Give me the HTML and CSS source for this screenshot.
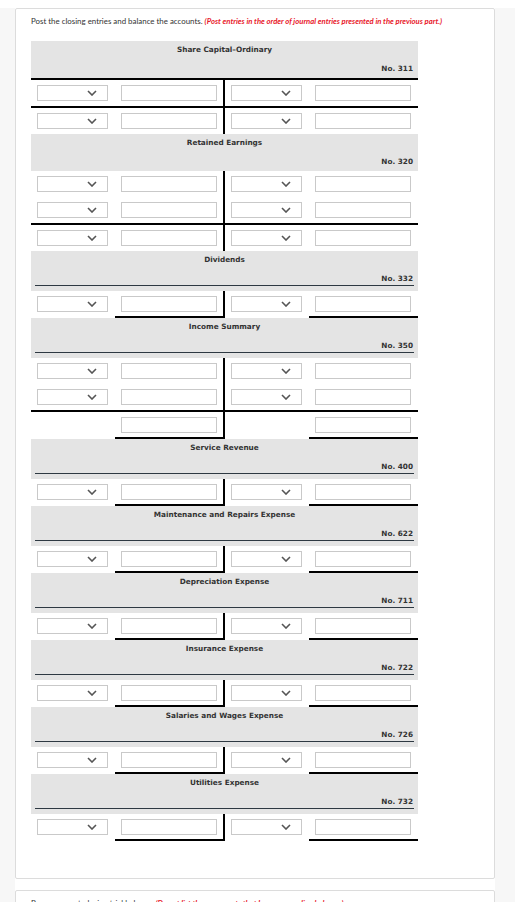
FILE: index.html
```html
<!DOCTYPE html>
<html lang="en">
<head>
<meta charset="utf-8">
<title>Post closing entries</title>
<link rel="stylesheet" href="styles.css">
</head>
<body>
<div class="page">
  <div class="column">
    <section class="card">
      <p class="prompt">Post the closing entries and balance the accounts. <em class="hint">(Post entries in the order of journal entries presented in the previous part.)</em></p>

      <!-- Share Capital–Ordinary -->
      <div class="acct">
        <div class="acct-head plain"><div class="acct-head-in"><div class="acct-title">Share Capital–Ordinary</div><div class="acct-no">No. 311</div></div></div>
        <div class="row rule">
          <div class="cell sel"><div class="select"><svg width="10" height="6" viewBox="0 0 10 6"><polyline points="1,1 5,5 9,1"/></svg></div></div>
          <div class="cell amt mid"><div class="input"></div></div>
          <div class="cell sel"><div class="select"><svg width="10" height="6" viewBox="0 0 10 6"><polyline points="1,1 5,5 9,1"/></svg></div></div>
          <div class="cell amt"><div class="input"></div></div>
        </div>
        <div class="row rule">
          <div class="cell sel"><div class="select"><svg width="10" height="6" viewBox="0 0 10 6"><polyline points="1,1 5,5 9,1"/></svg></div></div>
          <div class="cell amt mid"><div class="input"></div></div>
          <div class="cell sel"><div class="select"><svg width="10" height="6" viewBox="0 0 10 6"><polyline points="1,1 5,5 9,1"/></svg></div></div>
          <div class="cell amt"><div class="input"></div></div>
        </div>
      </div>

      <!-- Retained Earnings -->
      <div class="acct">
        <div class="acct-head plain"><div class="acct-head-in"><div class="acct-title">Retained Earnings</div><div class="acct-no">No. 320</div></div></div>
        <div class="row">
          <div class="cell sel"><div class="select"><svg width="10" height="6" viewBox="0 0 10 6"><polyline points="1,1 5,5 9,1"/></svg></div></div>
          <div class="cell amt mid"><div class="input"></div></div>
          <div class="cell sel"><div class="select"><svg width="10" height="6" viewBox="0 0 10 6"><polyline points="1,1 5,5 9,1"/></svg></div></div>
          <div class="cell amt"><div class="input"></div></div>
        </div>
        <div class="row">
          <div class="cell sel"><div class="select"><svg width="10" height="6" viewBox="0 0 10 6"><polyline points="1,1 5,5 9,1"/></svg></div></div>
          <div class="cell amt mid"><div class="input"></div></div>
          <div class="cell sel"><div class="select"><svg width="10" height="6" viewBox="0 0 10 6"><polyline points="1,1 5,5 9,1"/></svg></div></div>
          <div class="cell amt"><div class="input"></div></div>
        </div>
        <div class="row rule">
          <div class="cell sel"><div class="select"><svg width="10" height="6" viewBox="0 0 10 6"><polyline points="1,1 5,5 9,1"/></svg></div></div>
          <div class="cell amt mid"><div class="input"></div></div>
          <div class="cell sel"><div class="select"><svg width="10" height="6" viewBox="0 0 10 6"><polyline points="1,1 5,5 9,1"/></svg></div></div>
          <div class="cell amt"><div class="input"></div></div>
        </div>
      </div>

      <!-- Dividends -->
      <div class="acct">
        <div class="acct-head"><div class="acct-head-in"><div class="acct-title">Dividends</div><div class="acct-no">No. 332</div></div></div>
        <div class="row total">
          <div class="cell sel"><div class="select"><svg width="10" height="6" viewBox="0 0 10 6"><polyline points="1,1 5,5 9,1"/></svg></div></div>
          <div class="cell amt mid"><div class="input"></div></div>
          <div class="cell sel"><div class="select"><svg width="10" height="6" viewBox="0 0 10 6"><polyline points="1,1 5,5 9,1"/></svg></div></div>
          <div class="cell amt"><div class="input"></div></div>
        </div>
      </div>

      <!-- Income Summary -->
      <div class="acct">
        <div class="acct-head"><div class="acct-head-in"><div class="acct-title">Income Summary</div><div class="acct-no">No. 350</div></div></div>
        <div class="row">
          <div class="cell sel"><div class="select"><svg width="10" height="6" viewBox="0 0 10 6"><polyline points="1,1 5,5 9,1"/></svg></div></div>
          <div class="cell amt mid"><div class="input"></div></div>
          <div class="cell sel"><div class="select"><svg width="10" height="6" viewBox="0 0 10 6"><polyline points="1,1 5,5 9,1"/></svg></div></div>
          <div class="cell amt"><div class="input"></div></div>
        </div>
        <div class="row">
          <div class="cell sel"><div class="select"><svg width="10" height="6" viewBox="0 0 10 6"><polyline points="1,1 5,5 9,1"/></svg></div></div>
          <div class="cell amt mid"><div class="input"></div></div>
          <div class="cell sel"><div class="select"><svg width="10" height="6" viewBox="0 0 10 6"><polyline points="1,1 5,5 9,1"/></svg></div></div>
          <div class="cell amt"><div class="input"></div></div>
        </div>
        <div class="row rule total">
          <div class="cell sel"></div>
          <div class="cell amt mid"><div class="input"></div></div>
          <div class="cell sel"></div>
          <div class="cell amt"><div class="input"></div></div>
        </div>
      </div>

      <!-- Service Revenue -->
      <div class="acct">
        <div class="acct-head"><div class="acct-head-in"><div class="acct-title">Service Revenue</div><div class="acct-no">No. 400</div></div></div>
        <div class="row total">
          <div class="cell sel"><div class="select"><svg width="10" height="6" viewBox="0 0 10 6"><polyline points="1,1 5,5 9,1"/></svg></div></div>
          <div class="cell amt mid"><div class="input"></div></div>
          <div class="cell sel"><div class="select"><svg width="10" height="6" viewBox="0 0 10 6"><polyline points="1,1 5,5 9,1"/></svg></div></div>
          <div class="cell amt"><div class="input"></div></div>
        </div>
      </div>

      <!-- Maintenance and Repairs Expense -->
      <div class="acct">
        <div class="acct-head"><div class="acct-head-in"><div class="acct-title">Maintenance and Repairs Expense</div><div class="acct-no">No. 622</div></div></div>
        <div class="row total">
          <div class="cell sel"><div class="select"><svg width="10" height="6" viewBox="0 0 10 6"><polyline points="1,1 5,5 9,1"/></svg></div></div>
          <div class="cell amt mid"><div class="input"></div></div>
          <div class="cell sel"><div class="select"><svg width="10" height="6" viewBox="0 0 10 6"><polyline points="1,1 5,5 9,1"/></svg></div></div>
          <div class="cell amt"><div class="input"></div></div>
        </div>
      </div>

      <!-- Depreciation Expense -->
      <div class="acct">
        <div class="acct-head"><div class="acct-head-in"><div class="acct-title">Depreciation Expense</div><div class="acct-no">No. 711</div></div></div>
        <div class="row total">
          <div class="cell sel"><div class="select"><svg width="10" height="6" viewBox="0 0 10 6"><polyline points="1,1 5,5 9,1"/></svg></div></div>
          <div class="cell amt mid"><div class="input"></div></div>
          <div class="cell sel"><div class="select"><svg width="10" height="6" viewBox="0 0 10 6"><polyline points="1,1 5,5 9,1"/></svg></div></div>
          <div class="cell amt"><div class="input"></div></div>
        </div>
      </div>

      <!-- Insurance Expense -->
      <div class="acct">
        <div class="acct-head"><div class="acct-head-in"><div class="acct-title">Insurance Expense</div><div class="acct-no">No. 722</div></div></div>
        <div class="row total">
          <div class="cell sel"><div class="select"><svg width="10" height="6" viewBox="0 0 10 6"><polyline points="1,1 5,5 9,1"/></svg></div></div>
          <div class="cell amt mid"><div class="input"></div></div>
          <div class="cell sel"><div class="select"><svg width="10" height="6" viewBox="0 0 10 6"><polyline points="1,1 5,5 9,1"/></svg></div></div>
          <div class="cell amt"><div class="input"></div></div>
        </div>
      </div>

      <!-- Salaries and Wages Expense -->
      <div class="acct">
        <div class="acct-head"><div class="acct-head-in"><div class="acct-title">Salaries and Wages Expense</div><div class="acct-no">No. 726</div></div></div>
        <div class="row total">
          <div class="cell sel"><div class="select"><svg width="10" height="6" viewBox="0 0 10 6"><polyline points="1,1 5,5 9,1"/></svg></div></div>
          <div class="cell amt mid"><div class="input"></div></div>
          <div class="cell sel"><div class="select"><svg width="10" height="6" viewBox="0 0 10 6"><polyline points="1,1 5,5 9,1"/></svg></div></div>
          <div class="cell amt"><div class="input"></div></div>
        </div>
      </div>

      <!-- Utilities Expense -->
      <div class="acct">
        <div class="acct-head"><div class="acct-head-in"><div class="acct-title">Utilities Expense</div><div class="acct-no">No. 732</div></div></div>
        <div class="row total">
          <div class="cell sel"><div class="select"><svg width="10" height="6" viewBox="0 0 10 6"><polyline points="1,1 5,5 9,1"/></svg></div></div>
          <div class="cell amt mid"><div class="input"></div></div>
          <div class="cell sel"><div class="select"><svg width="10" height="6" viewBox="0 0 10 6"><polyline points="1,1 5,5 9,1"/></svg></div></div>
          <div class="cell amt"><div class="input"></div></div>
        </div>
      </div>
    </section>

    <section class="card next">
      <p class="prompt">Prepare a post-closing trial balance. <em class="hint">(Do not list those accounts that have zero ending balance.)</em></p>
    </section>
  </div>
</div>
</body>
</html>
```

FILE: styles.css
```css
html, body {
  margin: 0;
  padding: 0;
  background: #ffffff;
}

.page {
  margin-top: 8px;
  background: #f7f7f7;
  min-height: 894px;
  padding-left: 15px;
}

.column {
  width: 480px;
  background: #ffffff;
}

.card {
  box-sizing: border-box;
  width: 480px;
  border: 1px solid #dcdcdc;
  border-radius: 2px;
  background: #ffffff;
  padding: 7px 15px 37px 15px;
}

.card.next {
  margin-top: 11px;
  padding-bottom: 20px;
}

.prompt {
  margin: 0 0 15px 0;
  font-family: Lato, "Open Sans", sans-serif;
  font-size: 7.9px;
  line-height: 10px;
  color: #333333;
}

.hint {
  color: #e8182a;
  font-weight: 700;
  font-style: italic;
  font-size: 7.7px;
}

/* T-account */
.acct {
  width: 387px;
}

.acct-head {
  background: #e4e4e4;
  padding: 4px 4px 5px 4px;
  font-family: "DejaVu Sans", Verdana, sans-serif;
  font-weight: 700;
  font-size: 7.3px;
  color: #333333;
}

.acct-head-in {
  padding-bottom: 1px;
  border-bottom: 1px solid #2e3942;
}

.acct-head.plain {
  padding-bottom: 2px;
}

.acct-head.plain .acct-head-in {
  border-bottom-color: transparent;
}

.acct-title {
  text-align: center;
  line-height: 10px;
}

.acct-no {
  margin-top: 9px;
  line-height: 10px;
  text-align: right;
  padding-right: 1px;
}

.row {
  display: grid;
  grid-template-columns: 84px 110px 84px 109px;
}

.row.rule {
  border-top: 2px solid #000000;
}

.cell {
  box-sizing: border-box;
  padding: 5px 0 5px 6px;
  height: 26px;
}

.cell.mid {
  border-right: 2px solid #000000;
}

.row.total .cell {
  padding-bottom: 4px;
  height: 27px;
}

.row.total .cell.amt {
  border-bottom: 2px solid #000000;
}

.select,
.input {
  box-sizing: border-box;
  height: 16px;
  border: 1px solid #c9c9c9;
  background: #ffffff;
}

.select {
  width: 71px;
  display: flex;
  align-items: center;
  justify-content: flex-end;
  padding-right: 10px;
}

.select svg {
  display: block;
}

.select polyline {
  fill: none;
  stroke: #555555;
  stroke-width: 1.6;
}

.input {
  width: 96px;
}
```
